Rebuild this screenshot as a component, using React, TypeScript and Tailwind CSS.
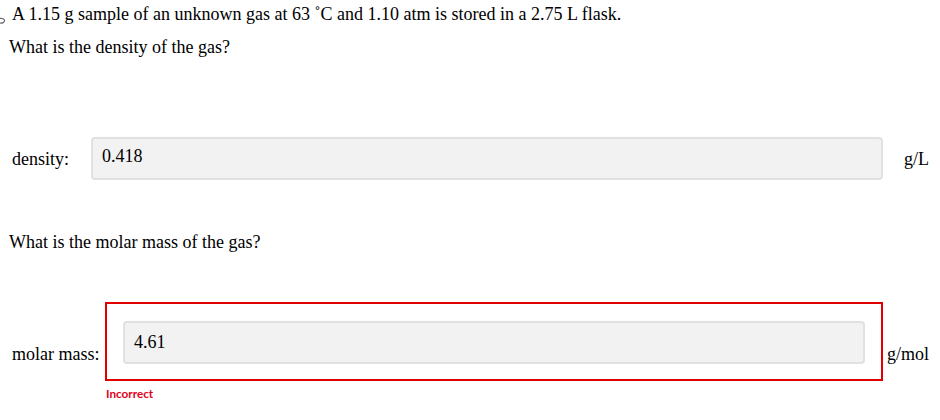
import React from 'react';

export default function App() {
  return (
    <div className="w-[940px] h-[420px] bg-white text-black font-['Liberation_Serif','Times_New_Roman',serif] text-[18px] leading-[20px] overflow-hidden pt-[4px]">
      {/* Question prompt */}
      <div className="flex items-center whitespace-nowrap">
        <svg width="6" height="20" viewBox="0 0 6 20" className="shrink-0">
          <path d="M0 14.5 C2.5 14 4.5 15 4.5 16.8 C4.5 18.4 2.5 19.3 0 19" fill="none" stroke="#666" strokeWidth="1.2" />
        </svg>
        <span className="ml-[6px]">A 1.15 g sample of an unknown gas at 63 ˚C and 1.10 atm is stored in a 2.75 L flask.</span>
      </div>

      <p className="pl-[9px] mt-[13px]">What is the density of the gas?</p>

      {/* Density answer */}
      <div className="flex items-center mt-[80px]">
        <span className="w-[91px] pl-[12px]">density:</span>
        <div className="w-[792px] h-[43px] rounded-[4px] border-2 border-[#e1e1e1] bg-[#f2f2f2] pl-[9px] pt-[7px]">
          0.418
        </div>
        <span className="pl-[21px]">g/L</span>
      </div>

      <p className="pl-[9px] mt-[52px]">What is the molar mass of the gas?</p>

      {/* Molar mass answer */}
      <div className="flex items-start mt-[50px]">
        <span className="w-[105px] pl-[12px] mt-[42px] whitespace-nowrap">molar mass:</span>
        <div className="flex flex-col">
          <div className="w-[778px] h-[79px] border-2 border-[#e00000] pl-[16px] pt-[17px]">
            <div className="w-[742px] h-[43px] rounded-[4px] border-2 border-[#e1e1e1] bg-[#f2f2f2] pl-[9px] pt-[9px]">
              4.61
            </div>
          </div>
          <span className="mt-[5px] pl-[1px] font-['Lato','Open_Sans',sans-serif] font-bold text-[11.75px] leading-[16px] text-[#e0001b]">
            Incorrect
          </span>
        </div>
        <span className="pl-[4px] mt-[42px]">g/mol</span>
      </div>
    </div>
  );
}
